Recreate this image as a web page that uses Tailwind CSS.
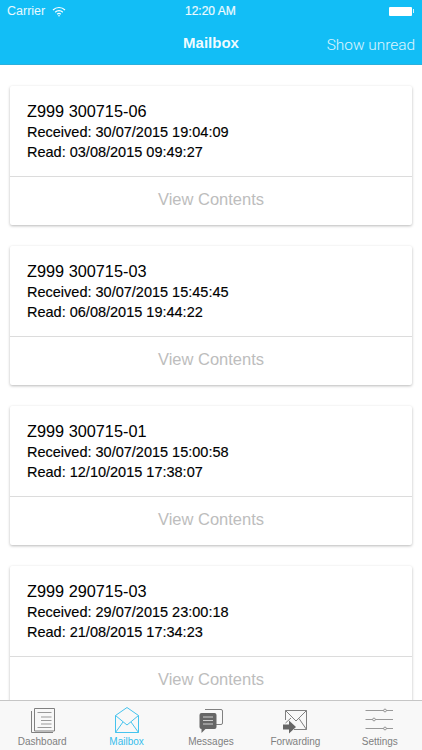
<!DOCTYPE html>
<html><head><meta charset="utf-8"><script src="https://cdn.jsdelivr.net/npm/@tailwindcss/browser@4"></script></head>
<body class="m-0">
<div class="w-[422px] h-[750px] flex flex-col overflow-hidden bg-[#f9f9f9] font-['Liberation_Sans',sans-serif]">
  <header class="h-[65px] shrink-0 bg-[#12bef6] border-b border-[#2bb0dd] text-white flex flex-col">
    <div class="h-[22px] flex items-center justify-between relative px-[7px] text-[12.5px] text-white/90">
      <div class="flex items-center gap-[7px]"><span>Carrier</span>
        <svg width="14" height="11" viewBox="0 0 14 11" fill="none" stroke="#fff" stroke-width="1.2"><path d="M1 4 A8.5 8.5 0 0 1 13 4"/><path d="M3.2 6.2 A5.4 5.4 0 0 1 10.8 6.2"/><path d="M5.2 8.2 A2.6 2.6 0 0 1 8.8 8.2"/><circle cx="7" cy="9.8" r="0.8" fill="#fff" stroke="none"/></svg>
      </div>
      <span class="absolute left-[185px] top-[4px] text-[12px] leading-[15px] [-webkit-text-stroke:0.2px_white]">12:20 AM</span>
      <div class="flex items-center mr-[1px]"><div class="w-[23px] h-[9px] bg-white rounded-[1px]"></div><div class="w-[1px] h-[4px] bg-white/80 ml-[1px]"></div></div>
    </div>
    <div class="flex-1 relative flex items-center justify-center">
      <span class="text-[15px] font-bold text-white/95">Mailbox</span>
      <span class="absolute right-[7px] top-[12px] text-[15.4px] text-white/85 font-['Roboto'] font-light">Show unread</span>
    </div>
  </header>
  <main class="flex-1 overflow-hidden bg-white flex flex-col gap-[21px] px-[10px] pt-[21px]">
    <article class="shrink-0 h-[139px] bg-white rounded-[2px] shadow-[0_1px_3px_rgba(0,0,0,0.28)] flex flex-col">
      <div class="h-[91px] border-b border-[#dcdcdc] pl-[17px] pt-[15px] text-black">
        <div class="text-[16.3px] leading-[20px] mb-[1px]">Z999 300715-06</div>
        <div class="text-[14.5px] leading-[20px] [-webkit-text-stroke:0.15px_black]">Received: 30/07/2015 19:04:09</div>
        <div class="text-[14.5px] leading-[20px] [-webkit-text-stroke:0.15px_black]">Read: 03/08/2015 09:49:27</div>
      </div>
      <div class="flex-1 flex items-center justify-center text-[16.5px] text-[#bdbdbd] pb-[4px]">View Contents</div>
    </article>
    <article class="shrink-0 h-[139px] bg-white rounded-[2px] shadow-[0_1px_3px_rgba(0,0,0,0.28)] flex flex-col">
      <div class="h-[91px] border-b border-[#dcdcdc] pl-[17px] pt-[15px] text-black">
        <div class="text-[16.3px] leading-[20px] mb-[1px]">Z999 300715-03</div>
        <div class="text-[14.5px] leading-[20px] [-webkit-text-stroke:0.15px_black]">Received: 30/07/2015 15:45:45</div>
        <div class="text-[14.5px] leading-[20px] [-webkit-text-stroke:0.15px_black]">Read: 06/08/2015 19:44:22</div>
      </div>
      <div class="flex-1 flex items-center justify-center text-[16.5px] text-[#bdbdbd] pb-[4px]">View Contents</div>
    </article>
    <article class="shrink-0 h-[139px] bg-white rounded-[2px] shadow-[0_1px_3px_rgba(0,0,0,0.28)] flex flex-col">
      <div class="h-[91px] border-b border-[#dcdcdc] pl-[17px] pt-[15px] text-black">
        <div class="text-[16.3px] leading-[20px] mb-[1px]">Z999 300715-01</div>
        <div class="text-[14.5px] leading-[20px] [-webkit-text-stroke:0.15px_black]">Received: 30/07/2015 15:00:58</div>
        <div class="text-[14.5px] leading-[20px] [-webkit-text-stroke:0.15px_black]">Read: 12/10/2015 17:38:07</div>
      </div>
      <div class="flex-1 flex items-center justify-center text-[16.5px] text-[#bdbdbd] pb-[4px]">View Contents</div>
    </article>
    <article class="shrink-0 h-[139px] bg-white rounded-[2px] shadow-[0_1px_3px_rgba(0,0,0,0.28)] flex flex-col">
      <div class="h-[91px] border-b border-[#dcdcdc] pl-[17px] pt-[15px] text-black">
        <div class="text-[16.3px] leading-[20px] mb-[1px]">Z999 290715-03</div>
        <div class="text-[14.5px] leading-[20px] [-webkit-text-stroke:0.15px_black]">Received: 29/07/2015 23:00:18</div>
        <div class="text-[14.5px] leading-[20px] [-webkit-text-stroke:0.15px_black]">Read: 21/08/2015 17:34:23</div>
      </div>
      <div class="flex-1 flex items-center justify-center text-[16.5px] text-[#bdbdbd] pb-[4px]">View Contents</div>
    </article>
  </main>
  <nav class="h-[50px] shrink-0 bg-[#f8f8f8] border-t border-[#c6c6c6] grid grid-cols-5 text-[10px] text-[#7f7f7f]">
    <div class="flex flex-col items-center pt-[4px]">
      <svg class="h-[30px] w-[30px]" viewBox="0 0 30 30" fill="none" stroke="#808080" stroke-width="1"><path d="M4.5 6 V27.5 H26"/><path d="M7.5 3.5 H27.5 V26 H7.5 Z"/><path d="M10.5 7.5H24.5M14 12H24.5M14 15.5H24.5M14 19H24.5M10.5 22.5H24.5" stroke="#999"/></svg>
      <span class="leading-[13px]">Dashboard</span>
    </div>
    <div class="flex flex-col items-center pt-[4px] text-[#35bdec]">
      <svg class="h-[30px] w-[30px]" viewBox="0 0 30 30" fill="none" stroke="#45c3ee" stroke-width="1"><path d="M3.5 10.5 L15 2.5 L26.5 10.5 V27.5 H3.5 Z"/><path d="M3.5 10.5 L15 20 L26.5 10.5"/><path d="M3.5 27.5 L11 17M26.5 27.5 L19 17"/></svg>
      <span class="leading-[13px]">Mailbox</span>
    </div>
    <div class="flex flex-col items-center pt-[4px]">
      <svg class="h-[30px] w-[30px]" viewBox="0 0 30 30" fill="none"><path d="M9 4.5 H25 a1.5 1.5 0 0 1 1.5 1.5 V18 a1.5 1.5 0 0 1 -1.5 1.5 H20" stroke="#808080" stroke-width="1"/><path d="M5.5 8 H18.5 a2 2 0 0 1 2 2 V22 a2 2 0 0 1 -2 2 H9.5 L5.5 28 V24 a2 2 0 0 1 -2 -2 V10 a2 2 0 0 1 2 -2 Z" fill="#666"/><path d="M7 12H17M7 15.5H17M7 19H17" stroke="#cfcfcf" stroke-width="1"/></svg>
      <span class="leading-[13px]">Messages</span>
    </div>
    <div class="flex flex-col items-center pt-[4px]">
      <svg class="h-[30px] w-[30px]" viewBox="0 0 30 30" fill="none"><path d="M5.5 5.5 H26.5 V24.5 H14 M5.5 5.5 V15" stroke="#808080" stroke-width="1"/><path d="M5.5 5.5 L16 16 L26.5 5.5M26.5 24.5 L19 13.5M5.5 18 L11 13" stroke="#808080" stroke-width="1"/><path d="M3 19.5 H9 V15.5 L16 22 L9 28.5 V24.5 H3 Z" fill="#666"/></svg>
      <span class="leading-[13px]">Forwarding</span>
    </div>
    <div class="flex flex-col items-center pt-[4px]">
      <svg class="h-[30px] w-[30px]" viewBox="0 0 30 30" fill="none" stroke="#808080" stroke-width="0.8"><path d="M0.5 5.5H18.5M21.5 5.5H28"/><circle cx="20" cy="5.5" r="1.4"/><path d="M0.5 14.5H7.5M10.5 14.5H28"/><circle cx="9" cy="14.5" r="1.4"/><path d="M0.5 23.5H18.5M21.5 23.5H28"/><circle cx="20" cy="23.5" r="1.4"/></svg>
      <span class="leading-[13px]">Settings</span>
    </div>
  </nav>
</div>
</body></html>
